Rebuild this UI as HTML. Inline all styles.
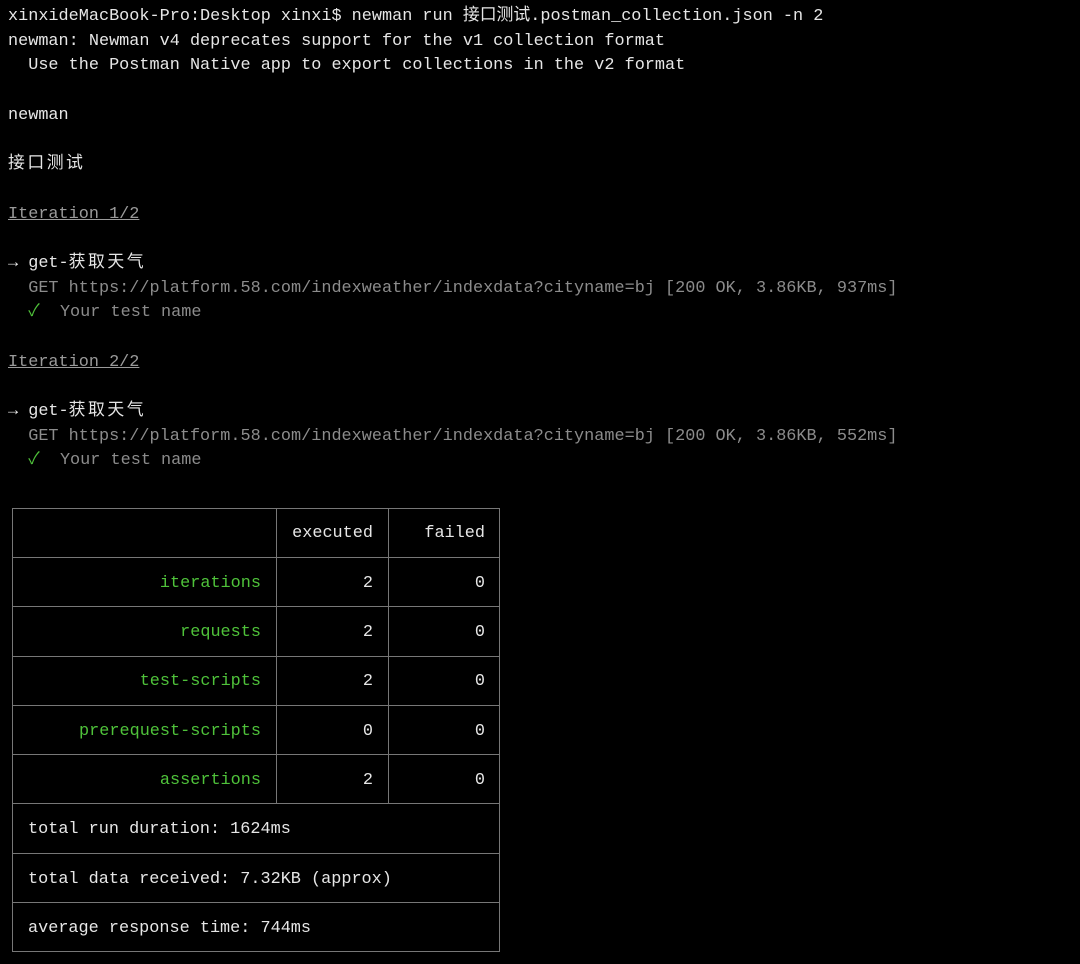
<!DOCTYPE html>
<html><head><meta charset="utf-8"><style>
body{margin:0;background:#000;width:1080px;height:964px;overflow:hidden;position:relative;font-family:"Liberation Mono","Noto Sans CJK SC",monospace;font-size:16.85px;color:#e6e6e6}
.l{position:absolute;left:8px;white-space:pre;line-height:24px;height:24px}
.g{color:#8c8c8c}.gr{color:#4fc23a}
.u{color:#9a9a9a;text-decoration:underline}
.b{position:absolute;background:#777}
.t{position:absolute;white-space:pre;line-height:24px}
.c{letter-spacing:2.5px}
</style></head><body>
<div class="l" style="top:5px">xinxideMacBook-Pro:Desktop xinxi$ newman run 接口测试.postman_collection.json -n 2</div>
<div class="l" style="top:30px">newman: Newman v4 deprecates support for the v1 collection format</div>
<div class="l" style="top:54px">  Use the Postman Native app to export collections in the v2 format</div>
<div class="l" style="top:104px">newman</div>
<div class="l c" style="top:153px">接口测试</div>
<div class="l u" style="top:203px">Iteration 1/2</div>
<div class="l" style="top:252px">→ get-<span class="c">获取天气</span></div>
<div class="l g" style="top:277px">  GET https://platform.58.com/indexweather/indexdata?cityname=bj [200 OK, 3.86KB, 937ms]</div>
<div class="l g" style="top:301px">  <span class="gr">✓</span>  Your test name</div>
<div class="l u" style="top:351px">Iteration 2/2</div>
<div class="l" style="top:400px">→ get-<span class="c">获取天气</span></div>
<div class="l g" style="top:425px">  GET https://platform.58.com/indexweather/indexdata?cityname=bj [200 OK, 3.86KB, 552ms]</div>
<div class="l g" style="top:449px">  <span class="gr">✓</span>  Your test name</div>

<div class="b" style="left:12px;top:508px;width:488px;height:1px"></div>
<div class="b" style="left:12px;top:557px;width:488px;height:1px"></div>
<div class="b" style="left:12px;top:606px;width:488px;height:1px"></div>
<div class="b" style="left:12px;top:656px;width:488px;height:1px"></div>
<div class="b" style="left:12px;top:705px;width:488px;height:1px"></div>
<div class="b" style="left:12px;top:754px;width:488px;height:1px"></div>
<div class="b" style="left:12px;top:803px;width:488px;height:1px"></div>
<div class="b" style="left:12px;top:853px;width:488px;height:1px"></div>
<div class="b" style="left:12px;top:902px;width:488px;height:1px"></div>
<div class="b" style="left:12px;top:951px;width:488px;height:1px"></div>
<div class="b" style="left:12px;top:508px;width:1px;height:444px"></div>
<div class="b" style="left:499px;top:508px;width:1px;height:444px"></div>
<div class="b" style="left:276px;top:508px;width:1px;height:296px"></div>
<div class="b" style="left:388px;top:508px;width:1px;height:296px"></div>

<div class="t" style="right:707px;top:522px">executed</div>
<div class="t" style="right:595px;top:522px">failed</div>

<div class="t gr" style="right:819px;top:572px">iterations</div>
<div class="t" style="right:707px;top:572px">2</div><div class="t" style="right:595px;top:572px">0</div>
<div class="t gr" style="right:819px;top:621px">requests</div>
<div class="t" style="right:707px;top:621px">2</div><div class="t" style="right:595px;top:621px">0</div>
<div class="t gr" style="right:819px;top:670px">test-scripts</div>
<div class="t" style="right:707px;top:670px">2</div><div class="t" style="right:595px;top:670px">0</div>
<div class="t gr" style="right:819px;top:720px">prerequest-scripts</div>
<div class="t" style="right:707px;top:720px">0</div><div class="t" style="right:595px;top:720px">0</div>
<div class="t gr" style="right:819px;top:769px">assertions</div>
<div class="t" style="right:707px;top:769px">2</div><div class="t" style="right:595px;top:769px">0</div>

<div class="t" style="left:28px;top:818px">total run duration: 1624ms</div>
<div class="t" style="left:28px;top:868px">total data received: 7.32KB (approx)</div>
<div class="t" style="left:28px;top:917px">average response time: 744ms</div>
</body></html>
